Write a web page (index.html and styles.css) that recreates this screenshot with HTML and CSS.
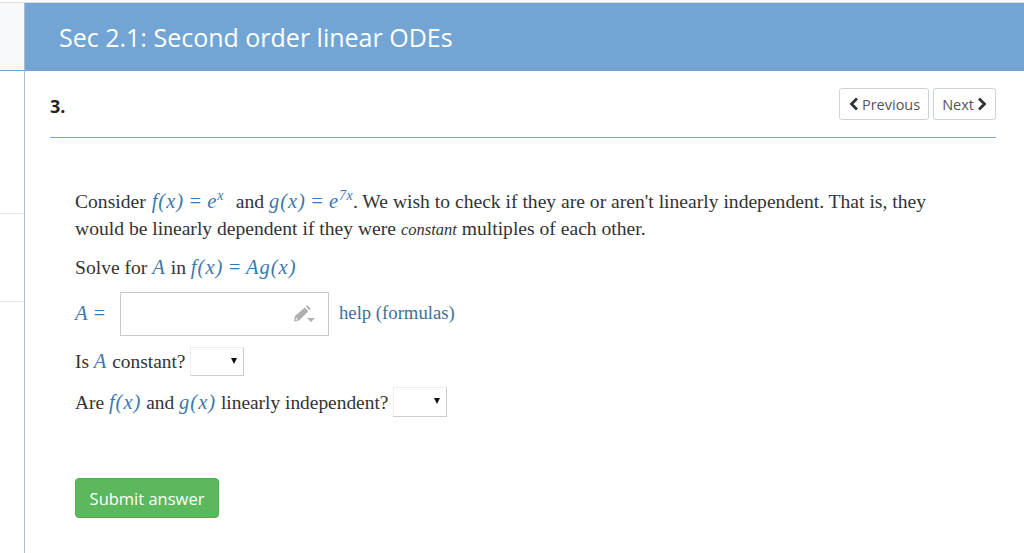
FILE: index.html
```html
<!DOCTYPE html>
<html lang="en">
<head>
    <meta charset="UTF-8">
    <meta name="viewport" content="width=device-width, initial-scale=1.0">
    <title>Sec 2.1: Second order linear ODEs</title>
    <link rel="stylesheet" href="styles.css">
</head>
<body>
    <div class="page">
        <aside class="sidebar">
            <div class="side-top"></div>
            <div class="side-item"></div>
            <div class="side-item short"></div>
        </aside>
        <main class="main">
            <header class="banner">
                <h1>Sec 2.1: Second order linear ODEs</h1>
            </header>
            <section class="content">
                <div class="problem-head">
                    <h2>3.</h2>
                    <nav class="pager">
                        <a class="btn" href="#">
                            <svg class="chev" viewBox="0 0 10 14"><path d="M8 1.5 2.5 7 8 12.5"/></svg>
                            Previous
                        </a>
                        <a class="btn" href="#">
                            Next
                            <svg class="chev" viewBox="0 0 10 14"><path d="M2 1.5 7.5 7 2 12.5"/></svg>
                        </a>
                    </nav>
                </div>
                <div class="question">
                    <p class="intro">Consider <span class="m fx">f(x) = e<sup>x</sup></span> and <span class="m">g(x) = e<sup>7x</sup></span>. We wish to check if they are or aren't linearly independent. That is, they would be linearly dependent if they were <em>constant</em> multiples of each other.</p>
                    <p class="solve">Solve for <span class="m">A</span> in <span class="m">f(x) = Ag(x)</span></p>
                    <div class="answer-row">
                        <span class="m answer-label">A =</span>
                        <div class="answer-box">
                            <svg class="pencil" viewBox="0 0 24 20">
                                <path class="fill" d="M14.2 1.2 17.8 4.8 16.4 6.2 12.8 2.6Z"/>
                                <path class="fill" d="M11.8 3.6 15.4 7.2 6.4 16.2 1 17.6 1.9 12.1ZM3 13.6 2.7 15.8 4.9 15.3Z"/>
                                <path class="fill" d="M14 14H22L18 18Z"/>
                            </svg>
                        </div>
                        <a class="help" href="#">help (formulas)</a>
                    </div>
                    <div class="select-row first">
                        <span>Is <span class="m">A</span> constant?</span>
                        <span class="pick-wrap small"><select class="pick"><option></option></select></span>
                    </div>
                    <div class="select-row">
                        <span>Are <span class="m">f(x)</span> and <span class="m">g(x)</span> linearly independent?</span>
                        <span class="pick-wrap"><select class="pick"><option></option></select></span>
                    </div>
                </div>
                <button class="submit">Submit answer</button>
            </section>
        </main>
    </div>
</body>
</html>
```

FILE: styles.css
```css
* {
    box-sizing: border-box;
}

html, body {
    height: 100%;
}

body {
    margin: 0;
    padding-top: 2px;
    overflow: hidden;
    background-color: #fff;
    color: #333;
    font-family: 'Open Sans', sans-serif;
}

.page {
    display: flex;
    height: 551px;
    border-top: 1px solid #dcdcdc;
}

.sidebar {
    width: 25px;
    flex-shrink: 0;
    border-right: 1px solid #a9bccd;
}

.side-top {
    height: 68px;
    background-color: #f8f9fb;
    border-bottom: 1px solid #72a5d3;
}

.side-item {
    height: 143px;
    border-bottom: 1px solid #e4e8ec;
}

.side-item.short {
    height: 88px;
}

.main {
    flex: 1;
}

.banner {
    height: 68px;
    padding-left: 34px;
    display: flex;
    align-items: center;
    background-color: #72a5d3;
}

.banner h1 {
    margin: 0;
    font-size: 25px;
    font-weight: 400;
    color: #fff;
}

.content {
    padding: 0 28px 0 25px;
}

.problem-head {
    height: 67px;
    display: flex;
    justify-content: space-between;
    align-items: flex-start;
    padding-top: 17px;
    border-bottom: 1px solid #7ea7cd;
}

.problem-head h2 {
    margin: 8px 0 0;
    font-size: 18px;
    font-weight: 700;
    line-height: 20px;
    color: #222;
}

.pager {
    display: flex;
    gap: 4px;
}

.btn {
    height: 32px;
    padding: 0 8px;
    display: flex;
    align-items: center;
    gap: 3px;
    border: 1px solid #ccd2d8;
    border-radius: 3px;
    font-size: 14.5px;
    color: #555;
    text-decoration: none;
}

.btn:first-child {
    padding-left: 9px;
}

.chev {
    width: 10px;
    height: 14px;
    fill: none;
    stroke: #333;
    stroke-width: 2.8;
}

.question {
    width: 890px;
    padding: 50px 0 0 25px;
    font-family: 'Liberation Serif', serif;
    font-size: 19.6px;
    color: #333;
}

.intro {
    margin: 0;
    line-height: 27px;
}

.solve {
    margin: 11px 0 0;
    line-height: 27px;
}

.m {
    font-size: 20.5px;
    font-style: italic;
    letter-spacing: 1px;
    word-spacing: -2px;
    color: #3d78ad;
}

.m.fx {
    margin: 0 7px 0 1px;
}

.m sup {
    font-size: 14px;
    letter-spacing: 0.3px;
    line-height: 0;
}

em {
    font-size: 16.5px;
}

.answer-row {
    display: flex;
    align-items: center;
    margin-top: 11px;
}

.answer-label {
    width: 45px;
    margin-top: -2px;
}

.answer-box {
    width: 209px;
    height: 44px;
    margin-right: 10px;
    display: flex;
    align-items: center;
    justify-content: flex-end;
    padding-right: 11px;
    border: 1px solid #c9c9c9;
}

.pencil {
    width: 24px;
    height: 20px;
}

.fill {
    fill: #b0b0b0;
}

.help {
    margin-top: -2px;
    font-size: 18.7px;
    color: #3d6f9e;
    text-decoration: none;
}

.select-row {
    display: flex;
    align-items: center;
    gap: 5px;
    margin-top: 11px;
    font-size: 19.4px;
}

.pick-wrap {
    position: relative;
    display: block;
    width: 54px;
    height: 30px;
}

.pick-wrap.small {
    height: 29px;
}

.pick-wrap::after {
    content: "";
    position: absolute;
    top: 11px;
    right: 7px;
    border-style: solid;
    border-width: 6px 3.5px 0;
    border-color: #111 transparent transparent;
}

.pick {
    display: block;
    width: 100%;
    height: 100%;
    appearance: none;
    border: 1px solid #eee;
    border-right-color: #ccc;
    border-bottom-color: #ccc;
    border-radius: 0;
    background-color: #fff;
}

.submit {
    display: block;
    width: 144px;
    height: 40px;
    margin: 61px 0 0 25px;
    border: 1px solid #4cae4c;
    border-radius: 4px;
    background-color: #5cb85c;
    color: #fff;
    font-family: 'Open Sans', sans-serif;
    font-size: 16.5px;
}
```
